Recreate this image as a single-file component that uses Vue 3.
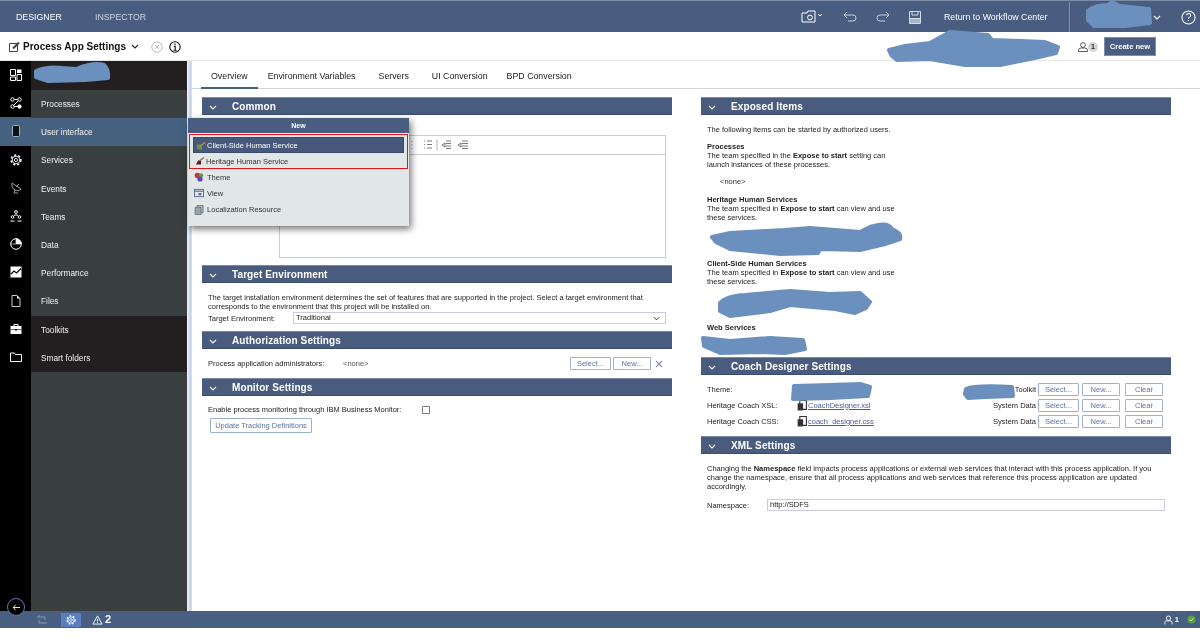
<script setup>
const nav = [
  { label: 'Processes', icon: 'proc' },
  { label: 'User interface', icon: 'phone', active: true },
  { label: 'Services', icon: 'gear' },
  { label: 'Events', icon: 'dish' },
  { label: 'Teams', icon: 'team' },
  { label: 'Data', icon: 'pie' },
  { label: 'Performance', icon: 'perf' },
  { label: 'Files', icon: 'file' },
  { label: 'Toolkits', icon: 'kit', dark: true },
  { label: 'Smart folders', icon: 'folder', dark: true }
]
const tabs = ['Overview', 'Environment Variables', 'Servers', 'UI Conversion', 'BPD Conversion']
const coachRows = [
  { label: 'Theme:', source: 'Toolkit' },
  { label: 'Heritage Coach XSL:', file: 'CoachDesigner.xsl', source: 'System Data' },
  { label: 'Heritage Coach CSS:', file: 'coach_designer.css', source: 'System Data' }
]
const blobs = [
  'M36 71 Q48 66 62 68 L76 69 Q94 62 104 65 Q109 70 108 78 L85 80 L48 81 L36 77 Z',
  'M1088 11 Q1095 5 1108 5 L1112 2 L1120 6 L1149 9 L1150 23 L1125 26 L1094 26 L1088 20 Z',
  'M889 50 L905 46 L930 43 L950 32 L988 35 L992 40 L1045 42 L1058 47 L1056 53 L1030 59 L1000 65 L965 65 L930 59 L897 60 L892 56 Z',
  'M712 237 L730 233 L785 230 L810 228 L860 232 L870 227 Q888 221 892 229 Q902 233 900 239 L885 244 L860 250 L820 249 L818 253 L780 254 L730 249 L716 242 Z',
  'M720 303 Q726 296 745 295 L790 291 L830 294 L860 293 L870 302 L866 308 L855 313 L835 309 L790 305 L770 311 L730 316 L720 311 Z',
  'M703 338 L730 341 L770 338 L803 340 L805 349 L785 353 L760 352 L720 353 L704 346 Z',
  'M794 386 L830 385 L860 384 L870 387 L868 396 L830 398 L793 399 Z',
  'M966 389 Q975 385 1012 387 L1013 396 L985 397 L968 398 L965 394 Z'
]
</script>

<template>
  <div class="app">
    <header class="top">
      <div class="top-tabs"><span class="on">DESIGNER</span><span class="off">INSPECTOR</span></div>
      <div class="top-tools">
        <svg class="i-cam" viewBox="0 0 22 14"><path d="M1 3h5l1-2h7v11H1z" fill="none" stroke="#fff" stroke-width="1"/><circle cx="9" cy="7.500" r="2.400" fill="none" stroke="#fff"/><path d="M17 4l2 2 2-2" fill="none" stroke="#fff"/></svg>
        <svg class="i-arrow" viewBox="0 0 14 12"><path d="M4 1L1 4l3 3M1 4h9q3 0 3 3t-3 3H5" fill="none" stroke="#c7d0de"/></svg>
        <svg class="i-arrow" viewBox="0 0 14 12"><path d="M10 1l3 3-3 3M13 4H4Q1 4 1 7t3 3h5" fill="none" stroke="#c7d0de"/></svg>
        <svg class="i-save" viewBox="0 0 12 13"><path d="M.5.5h11v12H.5zM3 .5v3.500h6V.5M.5 7.500h11" fill="none" stroke="#d5dbe5"/><rect x="1" y="8" width="10" height="4" fill="#a9b4c6"/></svg>
        <span class="return">Return to Workflow Center</span>
      </div>
      <div class="top-user">
        <svg class="i-chev user-chev" viewBox="0 0 8 5"><path d="M1 1l3 3 3-3" fill="none" stroke="#fff" stroke-width="1.100"/></svg>
        <svg class="i-help" viewBox="0 0 16 16"><circle cx="8" cy="8" r="7" fill="none" stroke="#fff" stroke-width="1.100"/><text x="8" y="11.500" text-anchor="middle" class="help-q">?</text></svg>
      </div>
    </header>

    <div class="title">
      <svg class="i-edit" viewBox="0 0 12 11"><path d="M.5 2.500h8v8h-8z" fill="#fff" stroke="#444"/><path d="M3 7l6-6 2 1-6 6z" fill="#444"/></svg>
      <b class="title-text">Process App Settings</b>
      <svg class="i-chev title-chev" viewBox="0 0 8 5"><path d="M1 1l3 3 3-3" fill="none" stroke="#222" stroke-width="1.100"/></svg>
      <svg class="i-circ" viewBox="0 0 12 12"><circle cx="6" cy="6" r="5.200" fill="none" stroke="#bbb"/><path d="M4 4l4 4M8 4l-4 4" stroke="#bbb"/></svg>
      <svg class="i-circ info" viewBox="0 0 12 12"><circle cx="6" cy="6" r="5.200" fill="none" stroke="#111" stroke-width="1.100"/><path d="M6 2.600v1.400M4.800 5.400H6.200V9M4.600 9.200h3" fill="none" stroke="#111" stroke-width="1.100"/></svg>
      <div class="title-right">
        <svg class="i-person" viewBox="0 0 10 10"><circle cx="5" cy="3" r="2.400" fill="none" stroke="#333" stroke-width=".8"/><path d="M.6 9.500V8q0-1.800 2.400-2h4q2.400.2 2.400 2v1.500z" fill="none" stroke="#333" stroke-width=".8"/></svg>
        <span class="count">1</span>
        <button class="create">Create new</button>
      </div>
    </div>

    <div class="mid">
      <aside class="rail">
        <div class="rail-cell">
          <svg viewBox="0 0 12 12"><path d="M.5.500h5v6h-5zM.5 8h5v3.500h-5zM7 5.500h4.500v6H7z" fill="none" stroke="#fff"/><rect x="7" y=".5" width="4.500" height="3.500" fill="#fff"/></svg>
        </div>
        <div v-for="n in nav" :key="n.icon" class="rail-cell">
          <svg viewBox="0 0 12 12" class="rail-i">
            <g v-if="n.icon === 'proc'" fill="none" stroke="#fff"><circle cx="2.500" cy="2.500" r="1.700"/><circle cx="9.500" cy="2.500" r="1.700"/><circle cx="2.500" cy="9.500" r="1.700"/><circle cx="9.500" cy="9.500" r="1.700" fill="#fff"/><path d="M4.200 2.500h3.600M8.300 3.700L3.700 8.300M4.200 9.500h3.600"/></g>
            <g v-else-if="n.icon === 'phone'"><rect x="2.500" y=".5" width="7" height="11" rx="1" fill="#111" stroke="#9fb0c6"/></g>
            <g v-else-if="n.icon === 'gear'" fill="none" stroke="#fff"><circle cx="6" cy="6" r="1.600" stroke-width=".9"/><circle cx="6" cy="6" r="3.800" stroke-width=".9"/><circle cx="6" cy="6" r="4.900" stroke-width="1.500" stroke-dasharray="2.100 2.030"/></g>
            <g v-else-if="n.icon === 'dish'" fill="none" stroke="#aaa" stroke-width=".9"><path d="M2 1q-1 5 3 7t6-1z"/><path d="M5 8l-1 3h4M6 5l3-3"/></g>
            <g v-else-if="n.icon === 'team'" fill="none" stroke="#fff"><circle cx="6" cy="2" r="1.400"/><path d="M4 5.500q2-1.500 4 0"/><circle cx="2.500" cy="7" r="1.300"/><circle cx="9.500" cy="7" r="1.300"/><path d="M.5 11h4M7.500 11h4"/></g>
            <g v-else-if="n.icon === 'pie'"><circle cx="6" cy="6" r="5.300" fill="none" stroke="#fff"/><path d="M6 .7V6h5.300A5.300 5.300 0 0 0 6 .7zM.7 6H6" fill="#fff" stroke="#fff" stroke-width=".6"/></g>
            <g v-else-if="n.icon === 'perf'"><rect x=".5" y=".5" width="11" height="11" fill="#fff"/><path d="M1 8l3-3 2.500 2L11 2.500" fill="none" stroke="#000" stroke-width="1.200"/></g>
            <g v-else-if="n.icon === 'file'"><path d="M2 .5h5l3 3v8H2z" fill="none" stroke="#ccc"/><path d="M7 .5l3 3H7z" fill="#fff"/></g>
            <g v-else-if="n.icon === 'kit'"><path d="M4 3V1.500h4V3" fill="none" stroke="#fff"/><rect x=".5" y="3" width="11" height="8" fill="#fff"/><rect x="5" y="6" width="2" height="1.500" fill="#000"/><path d="M.5 6.500h11" stroke="#000" stroke-width=".6"/></g>
            <g v-else><path d="M.5 2h4l1 1.500h6V10.500H.5z" fill="none" stroke="#fff"/></g>
          </svg>
        </div>
        <div class="back">
          <svg viewBox="0 0 10 10"><path d="M4 2L1.500 5 4 8M1.500 5H9" fill="none" stroke="#fff"/></svg>
        </div>
      </aside>

      <nav class="nav">
        <div class="nav-head"></div>
        <div v-for="n in nav" :key="n.label" class="nav-row" :class="{ active: n.active, dark: n.dark }">{{ n.label }}</div>
      </nav>
      <div class="split"></div>

      <main class="main">
        <div class="tabs">
          <span v-for="(t, i) in tabs" :key="t" class="tab" :class="{ sel: i === 0 }">{{ t }}</span>
        </div>
        <div class="cols">
          <section class="col">
            <div class="sec h-common">
              <h2><svg viewBox="0 0 8 5"><path d="M1 1l3 3 3-3" fill="none" stroke="#fff" stroke-width="1.100"/></svg>Common</h2>
              <div class="editor">
                <div class="ed-bar">
                  <svg class="ed-tools" viewBox="0 0 62 12">
                    <g stroke="#555" stroke-width=".8" fill="none"><path d="M3 2v.8M3 5.500v.8M3 9v.8"/><path d="M15 2h.9M15 5.500h.9M15 9h.9M18 2h5M18 5.500h5M18 9h5"/><path d="M28 .5v11" stroke="#999"/><path d="M37 2h5M37 4.500h5M37 7h5M37 9.500h5M36 4l-3 2 3 2z"/><path d="M53 2h6M53 4.500h6M53 7h6M53 9.500h6M52 4l-3 2 3 2z"/></g>
                  </svg>
                </div>
              </div>
            </div>
            <div class="sec h-target">
              <h2><svg viewBox="0 0 8 5"><path d="M1 1l3 3 3-3" fill="none" stroke="#fff" stroke-width="1.100"/></svg>Target Environment</h2>
              <div class="body tgt">
                <p>The target installation environment determines the set of features that are supported in the project. Select a target environment that corresponds to the environment that this project will be installed on.</p>
                <div class="target-row">
                  <span class="lbl">Target Environment:</span>
                  <div class="select">Traditional<svg viewBox="0 0 8 5"><path d="M1 1l3 3 3-3" fill="none" stroke="#222" stroke-width="1.100"/></svg></div>
                </div>
              </div>
            </div>
            <div class="sec h-auth">
              <h2><svg viewBox="0 0 8 5"><path d="M1 1l3 3 3-3" fill="none" stroke="#fff" stroke-width="1.100"/></svg>Authorization Settings</h2>
              <div class="body auth-row">
                <span class="lbl auth-lbl">Process application administrators:</span>
                <span class="none">&lt;none&gt;</span>
                <button class="btn w41">Select...</button>
                <button class="btn w38">New...</button>
                <svg class="x" viewBox="0 0 8 8"><path d="M1 1l6 6M7 1L1 7" stroke="#8b95a3" stroke-width="1.200"/></svg>
              </div>
            </div>
            <div class="sec">
              <h2><svg viewBox="0 0 8 5"><path d="M1 1l3 3 3-3" fill="none" stroke="#fff" stroke-width="1.100"/></svg>Monitor Settings</h2>
              <div class="body mon">
                <div class="mon-row"><span class="lbl mon-lbl">Enable process monitoring through IBM Business Monitor:</span><span class="check"></span></div>
                <button class="btn upd">Update Tracking Definitions</button>
              </div>
            </div>
          </section>

          <section class="col">
            <div class="sec h-exposed">
              <h2><svg viewBox="0 0 8 5"><path d="M1 1l3 3 3-3" fill="none" stroke="#fff" stroke-width="1.100"/></svg>Exposed Items</h2>
              <div class="body ex">
                <p class="ex-intro">The following items can be started by authorized users.</p>
                <p class="ex-p"><b>Processes</b><br>The team specified in the <b>Expose to start</b> setting can<br>launch instances of these processes.</p>
                <p class="ex-none">&lt;none&gt;</p>
                <p class="ex-p"><b>Heritage Human Services</b><br>The team specified in <b>Expose to start</b> can view and use<br>these services.</p>
                <p class="ex-p ex-gap"><b>Client-Side Human Services</b><br>The team specified in <b>Expose to start</b> can view and use<br>these services.</p>
                <p class="ex-p ex-gap"><b>Web Services</b></p>
              </div>
            </div>
            <div class="sec h-coach">
              <h2><svg viewBox="0 0 8 5"><path d="M1 1l3 3 3-3" fill="none" stroke="#fff" stroke-width="1.100"/></svg>Coach Designer Settings</h2>
              <div class="coach">
                <div v-for="r in coachRows" :key="r.label" class="coach-row">
                  <span class="lbl coach-lbl">{{ r.label }}</span>
                  <span class="coach-file">
                    <template v-if="r.file">
                      <svg class="i-doc" viewBox="0 0 9 10"><path d="M2.500.5h6v8h-6z" fill="#fff" stroke="#333"/><path d="M.5 3h5v6.500h-5z" fill="#333"/></svg>
                      <a class="link">{{ r.file }}</a>
                    </template>
                  </span>
                  <span class="lbl coach-src">{{ r.source }}</span>
                  <button class="btn w41">Select...</button>
                  <button class="btn w38 new">New...</button>
                  <button class="btn w38 clear">Clear</button>
                </div>
              </div>
            </div>
            <div class="sec">
              <h2><svg viewBox="0 0 8 5"><path d="M1 1l3 3 3-3" fill="none" stroke="#fff" stroke-width="1.100"/></svg>XML Settings</h2>
              <div class="body xml">
                <p>Changing the <b>Namespace</b> field impacts process applications or external web services that interact with this process application. If you change the namespace, ensure that all process applications and web services that reference this process application are updated accordingly.</p>
                <div class="ns-row"><span class="lbl ns-lbl">Namespace:</span><div class="ns-input">http://SDFS</div></div>
              </div>
            </div>
          </section>
        </div>
      </main>

      <div class="menu">
        <div class="menu-head">New</div>
        <div class="menu-box">
          <div class="menu-item picked">
            <svg viewBox="0 0 10 9"><rect x="1" y="3" width="5" height="5" fill="#6f8f4a"/><path d="M5 4l4-3" stroke="#d08a2a" stroke-width="1.500"/></svg>Client-Side Human Service
          </div>
          <div class="menu-item">
            <svg viewBox="0 0 10 9"><path d="M1 8l2-4h3v4z" fill="#5a1f2c"/><path d="M5 4l4-3" stroke="#b05060" stroke-width="1.300"/></svg>Heritage Human Service
          </div>
        </div>
        <div class="menu-item">
          <svg viewBox="0 0 10 10"><circle cx="3.500" cy="3.500" r="2.800" fill="#c8352e"/><circle cx="7" cy="3.500" r="2.200" fill="#5c9a4a"/><circle cx="6" cy="7" r="2.600" fill="#5b48b8"/></svg>Theme
        </div>
        <div class="menu-item">
          <svg viewBox="0 0 11 10"><rect x=".5" y="1" width="10" height="8" fill="#dfe6ee" stroke="#56688a"/><path d="M.5 3h10" stroke="#56688a" stroke-width="1.200"/><rect x="5" y="5" width="3" height="2.500" fill="#56688a"/></svg>View
        </div>
        <div class="menu-item">
          <svg viewBox="0 0 10 11"><path d="M3 .5h6.500v8H3z" fill="#b9c2c4" stroke="#68757a"/><path d="M.8 2.500h6.500v8H.8z" fill="#9aa6a9" stroke="#68757a"/></svg>Localization Resource
        </div>
      </div>
    </div>

    <footer class="bottom">
      <svg class="b-swap" viewBox="0 0 10 10"><path d="M0 2h8V5M2 0v2M10 8H2V5" fill="none" stroke="#8a9ab3"/></svg>
      <span class="b-gear"><svg viewBox="0 0 12 12"><g fill="none" stroke="#fff"><circle cx="6" cy="6" r="1.600" stroke-width=".9"/><circle cx="6" cy="6" r="3.800" stroke-width=".9"/><circle cx="6" cy="6" r="4.900" stroke-width="1.500" stroke-dasharray="2.100 2.030"/></g></svg></span>
      <svg class="b-warn" viewBox="0 0 12 11"><path d="M6 1l5 9H1z" fill="none" stroke="#fff"/><path d="M6 4.200v3M6 8v1" stroke="#fff"/></svg>
      <b class="b-num">2</b>
      <svg class="b-person" viewBox="0 0 10 10"><circle cx="5" cy="3" r="2.400" fill="none" stroke="#fff"/><path d="M1 10V8q0-2 2-2h4q2 0 2 2v2" fill="none" stroke="#fff"/></svg>
      <b class="b-one">1</b>
      <svg class="b-ok" viewBox="0 0 10 10"><circle cx="5" cy="5" r="4.500" fill="#5aa13d"/><path d="M3 5.200l1.500 1.300L7 3.800" fill="none" stroke="#fff"/></svg>
    </footer>

    <svg class="ink" viewBox="0 0 1200 640" width="1200" height="640">
      <path v-for="(d, i) in blobs" :key="i" :d="d" fill="#6b90be" stroke="#6b90be" stroke-width="4" stroke-linejoin="round"/>
    </svg>
  </div>
</template>

<style scoped>
.app { position: relative; width: 1200px; height: 640px; overflow: hidden; background: #fff; font-family: "Liberation Sans", Arial, sans-serif; color: #1d1d1d; font-size: 7.5px; line-height: 9px; display: flex; flex-direction: column; filter: blur(.3px); }
svg { display: block; flex: none; }
p { margin: 0; }
button { font-family: inherit; }

.top { height: 32px; flex: none; box-sizing: border-box; background: #495d80; border-top: 1px solid #7d8ca6; padding-top: 1px; display: flex; align-items: center; color: #fff; font-size: 8.8px; }
.top-tabs { display: flex; gap: 33px; padding-left: 16px; }
.top-tabs .off { color: #cdd5e1; }
.top-tools { margin-left: auto; display: flex; align-items: center; }
.i-cam { width: 22px; height: 14px; margin-right: 20px; }
.i-arrow { width: 14px; height: 12px; margin-right: 19px; }
.i-save { width: 12px; height: 13px; margin-right: 23px; }
.return { width: 125px; }
.top-user { width: 131px; height: 100%; box-sizing: border-box; border-left: 1px solid #8090aa; display: flex; align-items: center; position: relative; }
.user-chev { width: 8px; height: 5px; margin-left: 83px; }
.i-help { width: 15px; height: 15px; margin-left: 20px; }
.help-q { font: 11px "Liberation Sans", sans-serif; fill: #fff; }

.title { height: 29px; flex: none; box-sizing: border-box; display: flex; align-items: center; padding: 1px 0 0 9px; border-bottom: 1px solid #e6e6e6; }
.i-edit { width: 12px; height: 11px; margin-right: 2px; }
.title-text { font-size: 10px; color: #111; }
.title-chev { width: 8px; height: 5px; margin: 0 0 0 5px; }
.i-circ { width: 12px; height: 12px; margin-left: 12px; }
.i-circ.info { margin-left: 6px; }
.title-right { margin-left: auto; display: flex; align-items: center; padding-right: 44px; }
.i-person { width: 10px; height: 10px; }
.count { width: 10px; height: 10px; border-radius: 50%; background: #d6d6d6; font-size: 7px; font-weight: 700; line-height: 10px; text-align: center; margin-right: 6px; }
.create { width: 52px; height: 19px; padding: 0; border: 1px solid #7b8eaa; background: #495d80; color: #fff; font-size: 7.6px; font-weight: 700; }

.mid { position: relative; height: 550px; flex: none; display: flex; }
.rail { width: 31px; background: #000; flex: none; position: relative; }
.rail-cell { height: 28.200px; display: flex; align-items: center; justify-content: center; }
.rail-cell:nth-child(3) { background: #46607f; }
.rail-cell svg { width: 12px; height: 12px; }
.back { position: absolute; left: 7px; top: 537px; width: 18px; height: 18px; box-sizing: border-box; border-radius: 50%; background: #000; border: 1px solid #5f7ba5; display: flex; align-items: center; justify-content: center; z-index: 3; }
.back svg { width: 9px; height: 9px; }

.nav { width: 156px; flex: none; background: #393f3f; color: #f2f2f2; font-size: 8.300px; }
.nav-head { height: 29px; background: #231f20; }
.nav-row { height: 28.200px; line-height: 28.200px; padding-left: 10px; }
.nav-row.active { background: #46607f; }
.nav-row.dark { background: #231f20; }
.split { width: 5px; flex: none; background: linear-gradient(90deg, #f2f5fa, #c5d1e4 70%, #dfe6f0); }

.main { flex: 1; min-width: 0; display: flex; flex-direction: column; }
.tabs { height: 28px; flex: none; box-sizing: border-box; border-bottom: 1px solid #d6d6d6; display: flex; padding-left: 9px; font-size: 8.800px; color: #222; }
.tab { padding: 0 10px; line-height: 30px; height: 28px; box-sizing: border-box; }
.tab:nth-child(3), .tab:nth-child(4) { margin-left: 3px; }
.tab:nth-child(5) { margin-left: -1px; }
.tab.sel { border-bottom: 2px solid #46607f; }
.cols { padding: 8px 29px 0 10px; display: flex; gap: 29px; }
.col { width: 470px; flex: none; }
.sec h2 { margin: 0; height: 18px; box-sizing: border-box; padding-top: 2px; background: #495c7e; border-top: 1px solid #7c8ba5; border-bottom: 1px solid #3a4d70; color: #fff; font-size: 10px; line-height: 14px; font-weight: 700; letter-spacing: .1px; display: flex; align-items: center; }
.sec h2 svg { width: 8px; height: 5px; margin: 0 15px 0 7px; }
.h-common { height: 168px; }
.h-target { height: 66px; }
.h-auth { height: 47px; }
.h-exposed { height: 260px; }
.h-coach { height: 79px; }
.body { padding: 9px 6px 0; }
.tgt { padding-top: 10px; }

.editor { margin: 20px 6px 0 77px; height: 123px; box-sizing: border-box; border: 1px solid #ccd; }
.ed-bar { height: 18px; border-bottom: 1px solid #ccd; display: flex; align-items: center; }
.ed-tools { width: 62px; height: 12px; margin-left: 129px; }

.target-row { display: flex; align-items: center; margin-top: 1px; }
.lbl { white-space: nowrap; }
.target-row .lbl { width: 85px; }
.select { flex: none; width: 373px; height: 12px; box-sizing: border-box; border: 1px solid #ccd; padding-left: 2px; line-height: 10px; display: flex; align-items: center; justify-content: space-between; }
.select svg { width: 7px; height: 5px; margin-right: 5px; }

.auth-row { display: flex; align-items: center; padding-top: 8px; }
.auth-lbl { width: 135px; }
.none { color: #555; flex: 1; }
.btn { height: 13px; box-sizing: border-box; padding: 0; background: #fff; border: 1px solid #9db1cf; border-radius: 1px; color: #5c71a3; font-size: 7.500px; line-height: 11px; }
.w41 { width: 41px; }
.w38 { width: 38px; margin-left: 2px; }
.x { width: 8px; height: 8px; margin: 0 3px 0 4px; }
.mon { padding-top: 9px; }
.mon-row { display: flex; align-items: center; height: 9px; }
.mon-lbl { width: 214px; }
.check { width: 8px; height: 8px; box-sizing: border-box; border: 1px solid #777; border-radius: 1px; }
.upd { width: 102px; height: 15px; margin: 4px 0 0 2px; display: block; }

.ex { padding-top: 10px; }
.ex-p { margin-top: 9px; }
.ex-intro + .ex-p { margin-top: 8px; }
.ex-none { margin: 8px 0 8px 13px; color: #333; }
.ex-gap { margin-top: 37px; }

.coach { padding-top: 6px; }
.coach-row { display: flex; align-items: center; height: 16px; padding: 0 8px 0 6px; }
.coach-lbl { width: 90px; }
.coach-file { width: 100px; display: flex; align-items: center; gap: 1px; }
.i-doc { width: 10px; height: 11px; }
.link { color: #4a5b96; text-decoration: underline; }
.coach-src { width: 136px; text-align: right; padding-right: 2px; margin-left: auto; }
.coach-row .new { margin-left: 3px; }
.clear { margin-left: 5px; }

.xml { padding-top: 10px; }
.ns-row { display: flex; align-items: center; margin-top: 8px; }
.ns-lbl { width: 60px; }
.ns-input { width: 398px; height: 12px; box-sizing: border-box; border: 1px solid #ccd; padding-left: 2px; line-height: 10px; }

.menu { position: absolute; left: 188px; top: 57px; width: 221px; height: 108px; background: #e0e7e6; box-shadow: 2px 3px 7px rgba(0,0,0,.55); z-index: 2; }
.menu-head { height: 15px; background: #495d80; color: #fff; text-align: center; font-size: 7px; font-weight: 700; line-height: 15px; }
.menu-box { margin: 1px 1px 0 1px; padding: 2px 3px 0; height: 35px; box-sizing: border-box; border: 1px solid #e3131a; }
.menu-item { height: 16.300px; box-sizing: border-box; display: flex; align-items: center; position: relative; font-size: 7.550px; color: #333; }
.menu-box .menu-item { padding-left: 13px; }
.menu-item svg { position: absolute; left: 6px; top: 3px; width: 10px; height: 10px; }
.menu-box .menu-item svg { left: 2px; }
.menu > .menu-item { padding-left: 19px; }
.menu-item.picked { background: #47597b; color: #fff; border: 1px solid #3a4a68; }

.bottom { height: 17px; flex: none; background: #495f82; display: flex; align-items: center; color: #fff; position: relative; }
.b-swap { width: 10px; height: 10px; margin-left: 37px; }
.b-gear { width: 20px; height: 14px; margin-left: 14px; background: #5a7fc0; display: flex; align-items: center; justify-content: center; }
.b-gear svg { width: 10px; height: 10px; }
.b-warn { width: 11px; height: 10px; margin-left: 11px; }
.b-num { font-size: 11px; margin-left: 2px; }
.b-person { width: 9px; height: 10px; margin-left: auto; }
.b-one { font-size: 7.500px; margin: 0 8px 0 2px; }
.b-ok { width: 9px; height: 9px; margin-right: 4px; }

.ink { position: absolute; left: 0; top: 0; pointer-events: none; z-index: 4; }
</style>
